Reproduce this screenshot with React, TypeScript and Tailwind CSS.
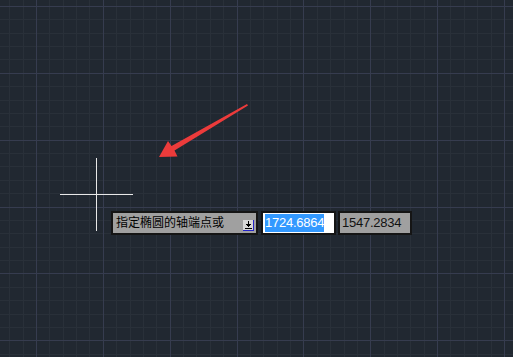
import React from "react";

const W = 513;
const H = 357;
const STEP = 13.37;

function Grid() {
  const xs: { v: number; major: boolean }[] = [];
  for (let i = -3; 36 + STEP * i < W; i++) {
    xs.push({ v: Math.round(36 + STEP * i) + 0.5, major: i % 5 === 0 });
  }
  const ys: { v: number; major: boolean }[] = [];
  for (let i = 0; 6 + STEP * i < H; i++) {
    ys.push({ v: Math.round(6 + STEP * i) + 0.5, major: i % 5 === 0 });
  }
  return (
    <svg className="absolute inset-0" width={W} height={H} viewBox={`0 0 ${W} ${H}`}>
      <rect width={W} height={H} fill="#212831" />
      {xs.filter((l) => !l.major).map((l, i) => (
        <line key={"xm" + i} x1={l.v} y1={0} x2={l.v} y2={H} stroke="#293039" strokeWidth={1} />
      ))}
      {ys.filter((l) => !l.major).map((l, i) => (
        <line key={"ym" + i} x1={0} y1={l.v} x2={W} y2={l.v} stroke="#293039" strokeWidth={1} />
      ))}
      {xs.filter((l) => l.major).map((l, i) => (
        <line key={"xM" + i} x1={l.v} y1={0} x2={l.v} y2={H} stroke="#363c4f" strokeWidth={1} />
      ))}
      {ys.filter((l) => l.major).map((l, i) => (
        <line key={"yM" + i} x1={0} y1={l.v} x2={W} y2={l.v} stroke="#363c4f" strokeWidth={1} />
      ))}
      {/* crosshair */}
      <line x1={96.5} y1={158} x2={96.5} y2={231} stroke="#e8e8e8" strokeWidth={1} />
      <line x1={60} y1={194.5} x2={133} y2={194.5} stroke="#e8e8e8" strokeWidth={1} />
      {/* arrow */}
      <polygon
        points="247,104 171.5,146 168,141 159,157 177.5,156.5 174.5,150.6 248,105.5"
        fill="#ec3b3b"
      />
    </svg>
  );
}

export default function App() {
  return (
    <div
      className="relative w-[513px] h-[357px] overflow-hidden bg-[#212831]"
      style={{ fontFamily: '"Liberation Sans", "Noto Sans CJK SC", sans-serif' }}
    >
      <Grid />
      <div className="absolute left-[111px] top-[211px] flex items-start">
        <div className="relative flex h-[24px] w-[147px] items-center border-2 border-[#151515] bg-[#a0a0a0] pl-[3px] text-[12px] leading-none text-black [font-family:'Noto_Sans_CJK_SC',sans-serif]">
          <span className="-mt-[3px]">指定椭圆的轴端点或</span>
          <div className="absolute left-[130px] top-[7px] flex h-[11px] w-[11px] items-center justify-center border-b border-r border-b-[#2323c8] border-r-[#2323c8] bg-[#d8d8d8]">
            <svg width="7" height="8" viewBox="0 0 7 8">
              <rect x="3" y="0" width="1" height="4" fill="#000" />
              <rect x="1" y="3" width="5" height="1" fill="#000" />
              <rect x="2" y="4" width="3" height="1" fill="#000" />
              <rect x="3" y="5" width="1" height="1" fill="#000" />
              <rect x="0" y="7" width="7" height="1" fill="#000" />
            </svg>
          </div>
        </div>
        <div className="ml-[3px] flex h-[24px] w-[75px] items-stretch border-2 border-[#151515] bg-white py-[1px] pl-[2px] text-[13px] leading-none tracking-[-0.25px]">
          <span className="flex items-center bg-[#3399ff] pb-[2px] text-white">1724.6864</span>
        </div>
        <div className="ml-[2px] flex h-[24px] w-[74px] items-center border-2 border-[#151515] bg-[#a0a0a0] pl-[2px] text-[13px] leading-none tracking-[-0.25px] text-[#111]">
          <span className="-mt-[2px]">1547.2834</span>
        </div>
      </div>
    </div>
  );
}
